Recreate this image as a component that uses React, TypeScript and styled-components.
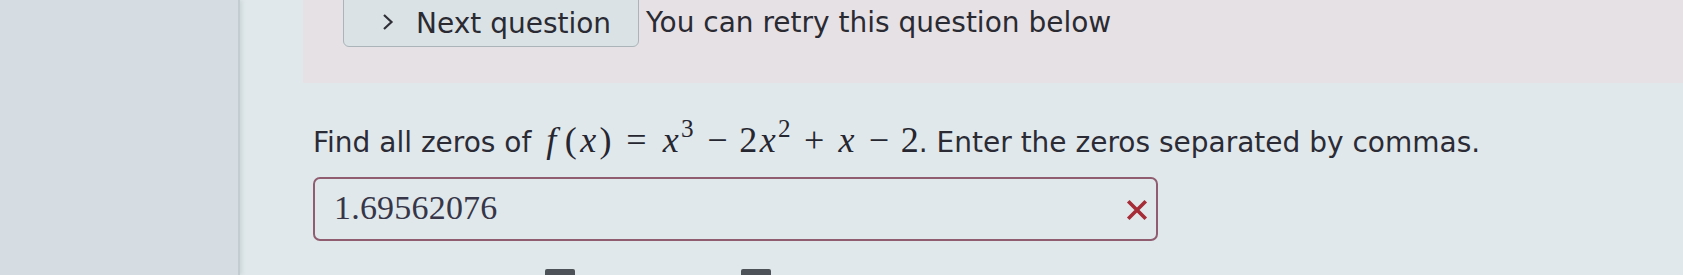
import React from 'react'
import styled, { createGlobalStyle } from 'styled-components'

const GlobalStyle = createGlobalStyle`
  html, body {
    margin: 0;
    padding: 0;
    height: 275px;
    overflow: hidden;
    background: #e0e8eb;
    font-family: 'DejaVu Sans', Verdana, sans-serif;
    color: #2a2a33;
  }
`

const Page = styled.div`
  display: flex;
  height: 275px;
`

const SidePanel = styled.div`
  width: 238px;
  flex-shrink: 0;
  background: #d5dde2;
  border-right: 2px solid #c3ccd1;
  box-shadow: 2px 0 4px rgba(60, 70, 80, 0.12);
`

const Content = styled.div`
  flex: 1;
  padding-left: 63px;
  display: flex;
  flex-direction: column;
`

const Banner = styled.div`
  height: 84px;
  background: #e6e1e4;
  padding-left: 40px;
  display: flex;
  align-items: flex-start;
`

const NextButton = styled.button`
  margin-top: -13px;
  height: 60px;
  box-sizing: border-box;
  display: flex;
  align-items: flex-end;
  gap: 22px;
  padding: 0 27px 5px 38px;
  background: #dae2e5;
  border: 1px solid #aab4b9;
  border-radius: 6px;
  font-family: 'DejaVu Sans', Verdana, sans-serif;
  font-size: 28px;
  line-height: 34px;
  color: #2a2a33;
  cursor: pointer;

  svg {
    margin-bottom: 10px;
  }
`

const Message = styled.span`
  margin-top: 6px;
  margin-left: 7px;
  font-size: 28px;
  line-height: 34px;
  color: #2a2a33;
`

const Question = styled.div`
  margin-top: 43px;
  padding-left: 10px;
  font-size: 28px;
  line-height: 34px;
  height: 34px;
  white-space: nowrap;
  color: #2b2b35;
`

const MathSpan = styled.span`
  font-family: 'Liberation Serif', 'Times New Roman', serif;
  font-size: 36px;
  line-height: 0;
  margin-left: 6px;
  color: #262630;
`

// one math atom in a box of KaTeX-like width (em)
const Atom = styled.span<{ $w: number; $i?: boolean; $left?: boolean; $sp?: number }>`
  display: inline-block;
  width: ${(p) => p.$w + 'em'};
  margin: 0 ${(p) => (p.$sp ?? 0) + 'em'};
  text-align: ${(p) => (p.$left ? 'left' : 'center')};
  font-style: ${(p) => (p.$i ? 'italic' : 'normal')};
  line-height: 0;
`

const Sup = styled.span`
  display: inline-block;
  width: 0.57em;
  font-size: 0.7em;
  line-height: 0;
  vertical-align: 0.62em;
`

const AnswerBox = styled.div`
  margin-top: 17px;
  margin-left: 10px;
  width: 845px;
  height: 64px;
  box-sizing: border-box;
  border: 2px solid #8f5d6f;
  border-radius: 7px;
  background: #e0e8eb;
  display: flex;
  align-items: center;
  justify-content: space-between;
  padding: 0 5px 3px 19px;
`

const AnswerValue = styled.span`
  font-family: 'Liberation Serif', 'Times New Roman', serif;
  font-size: 34px;
  color: #363648;
  letter-spacing: 0.2px;
`

const WrongMark = styled.span`
  display: flex;
  align-items: center;
  justify-content: center;
  width: 28px;
  height: 28px;
  margin-top: 4px;
`

const Toolbar = styled.div`
  margin-top: 28px;
  padding-left: 242px;
  display: flex;
  gap: 166px;
`

const ToolStub = styled.span`
  width: 30px;
  height: 6px;
  background: #4d5258;
  border-radius: 2px 2px 0 0;
`

const Chevron = () => (
  <svg width="12" height="18" viewBox="0 0 12 18">
    <path d="M2 2 L9.5 9 L2 16" fill="none" stroke="#2f2f38" strokeWidth="2.2" />
  </svg>
)

const Cross = () => (
  <svg width="22" height="22" viewBox="0 0 22 22">
    <path d="M3.5 3.5 L18.5 18.5 M18.5 3.5 L3.5 18.5" stroke="#a62c37" strokeWidth="3.6" strokeLinecap="square" />
  </svg>
)

const REL = 0.2778
const BIN = 0.2222

const App = () => (
  <>
    <GlobalStyle />
    <Page>
      <SidePanel />
      <Content>
        <Banner>
          <NextButton>
            <Chevron />
            Next question
          </NextButton>
          <Message>You can retry this question below</Message>
        </Banner>
        <Question>
          Find all zeros of{' '}
          <MathSpan>
            <Atom $w={0.49} $i $left>f</Atom>
            <Atom $w={0.389}>(</Atom>
            <Atom $w={0.572} $i>x</Atom>
            <Atom $w={0.389}>)</Atom>
            <Atom $w={0.778} $sp={REL}>=</Atom>
            <Atom $w={0.572} $i>x</Atom>
            <Sup>3</Sup>
            <Atom $w={0.778} $sp={BIN}>−</Atom>
            <Atom $w={0.5}>2</Atom>
            <Atom $w={0.572} $i>x</Atom>
            <Sup>2</Sup>
            <Atom $w={0.778} $sp={BIN}>+</Atom>
            <Atom $w={0.572} $i>x</Atom>
            <Atom $w={0.778} $sp={BIN}>−</Atom>
            <Atom $w={0.5}>2</Atom>
          </MathSpan>
          . Enter the zeros separated by commas.
        </Question>
        <AnswerBox>
          <AnswerValue>1.69562076</AnswerValue>
          <WrongMark>
            <Cross />
          </WrongMark>
        </AnswerBox>
        <Toolbar>
          <ToolStub />
          <ToolStub />
        </Toolbar>
      </Content>
    </Page>
  </>
)

export default App
